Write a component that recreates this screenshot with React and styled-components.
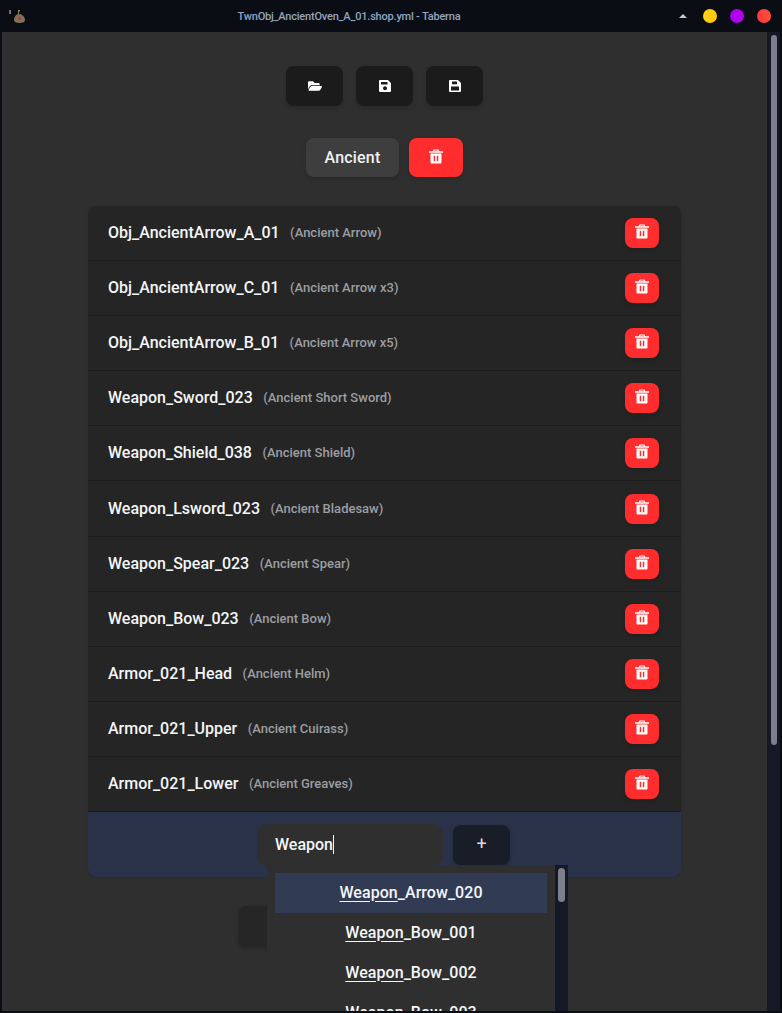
import React from 'react';
import styled, { createGlobalStyle } from 'styled-components';
import { FaFolderOpen } from 'react-icons/fa';

const GlobalStyle = createGlobalStyle`
  html, body {
    margin: 0;
    padding: 0;
    height: 100%;
    overflow: hidden;
    background: #0b0d14;
  }
  * {
    box-sizing: border-box;
  }
`;

const Window = styled.div`
  width: 782px;
  height: 1013px;
  display: flex;
  flex-direction: column;
  background: #0b0d14;
  padding: 0 2px 2px;
  font-family: Roboto, "Liberation Sans", sans-serif;
  overflow: hidden;
`;

const TitleBar = styled.header`
  height: 32px;
  flex: none;
  margin: 0 -2px;
  padding: 0 11px 0 8px;
  display: flex;
  align-items: center;
`;

const AppIcon = styled.svg`
  width: 20px;
  height: 20px;
  flex: none;
`;

const Title = styled.div`
  flex: 1;
  text-align: center;
  color: #93a5c2;
  font-size: 11px;
  font-weight: 500;
  letter-spacing: -0.2px;
  padding-right: 9px;
`;

const Arrow = styled.div`
  width: 0;
  height: 0;
  border-left: 4px solid transparent;
  border-right: 4px solid transparent;
  border-bottom: 4px solid #c4c7cf;
  margin-right: 16px;
`;

const Dot = styled.div`
  width: 14px;
  height: 14px;
  border-radius: 50%;
  background: ${({ $color }) => $color};
  margin-left: ${({ $first }) => ($first ? 0 : 13)}px;
`;

const Body = styled.div`
  flex: 1;
  min-height: 0;
  display: flex;
`;

const Main = styled.main`
  position: relative;
  flex: 1;
  min-width: 0;
  background: #2f2f2f;
  display: flex;
  flex-direction: column;
  align-items: center;
  padding-top: 34px;
  overflow: hidden;
`;

const Toolbar = styled.div`
  display: flex;
  justify-content: center;
  gap: 13px;
  margin-bottom: 32px;
`;

const ToolButton = styled.button`
  width: 57px;
  height: 40px;
  border: 0;
  border-radius: 8px;
  background: #1b1b1b;
  color: #fff;
  font-size: 14px;
  display: flex;
  align-items: center;
  justify-content: center;
  padding: 0 0 1px;
  box-shadow: 0 2px 4px rgba(0, 0, 0, 0.15);
`;

const Tabs = styled.div`
  display: flex;
  justify-content: center;
  gap: 10px;
  margin-bottom: 29px;
`;

const TabName = styled.button`
  width: 93px;
  height: 39px;
  border: 0;
  border-radius: 8px;
  background: #3e3e3e;
  color: #f2f2f2;
  font-family: inherit;
  font-size: 16px;
  font-weight: 500;
  letter-spacing: 0.2px;
  box-shadow: 0 2px 4px rgba(0, 0, 0, 0.15);
`;

const DangerButton = styled.button`
  width: ${({ $wide }) => ($wide ? 54 : 34)}px;
  height: ${({ $wide }) => ($wide ? 39 : 30)}px;
  flex: none;
  border: 0;
  padding: 0 0 3px;
  border-radius: 8px;
  background: #ff2d2d;
  color: #fff;
  display: flex;
  align-items: center;
  justify-content: center;
  box-shadow: 0 2px 4px rgba(0, 0, 0, 0.15);
`;

const ListCard = styled.section`
  width: 593px;
  border-radius: 8px;
  background: #252525;
  overflow: hidden;
  box-shadow: 0 0 3px rgba(0, 0, 0, 0.12);
`;

const Row = styled.div`
  height: 55.1px;
  display: flex;
  align-items: center;
  padding: 0 22px 0 20px;
  border-bottom: 1px solid #1c1c1c;
`;

const ItemName = styled.span`
  color: #f4f6f8;
  font-size: 16px;
  line-height: 18px;
  font-weight: 500;
`;

const ItemLabel = styled.span`
  flex: 1;
  margin-left: 10.5px;
  color: #9b9ea3;
  font-size: 13px;
  line-height: 18px;
  font-weight: 500;
`;

const AddBar = styled.div`
  height: 65px;
  background: #2a3249;
  display: flex;
  justify-content: center;
  align-items: center;
  gap: 10px;
  padding: 0 2px 0 0;
`;

const SearchBox = styled.div`
  width: 186px;
  height: 42px;
  border-radius: 10px;
  background: #2f2f2f;
  color: #f4f6f8;
  font-size: 16px;
  font-weight: 500;
  display: flex;
  align-items: center;
  padding-left: 18px;
`;

const Caret = styled.span`
  display: inline-block;
  width: 1px;
  height: 19px;
  background: #f4f6f8;
`;

const PlusButton = styled.button`
  width: 57px;
  height: 40px;
  border: 0;
  border-radius: 8px;
  background: #191d28;
  color: #dcdcdc;
  font-family: inherit;
  font-size: 18px;
  padding: 0 0 3px;
  box-shadow: 0 2px 4px rgba(0, 0, 0, 0.15);
`;

const FooterButton = styled.button`
  width: 120px;
  height: 41px;
  margin-top: 29px;
  margin-right: 173px;
  border: 0;
  border-radius: 8px;
  background: #262626;
  box-shadow: 0 2px 4px rgba(0, 0, 0, 0.15);
`;

const Dropdown = styled.div`
  position: absolute;
  left: 265px;
  top: 833px;
  width: 301px;
  height: 146px;
  display: flex;
  background: #2f2f2f;
  overflow: hidden;
`;

const Options = styled.div`
  flex: 1;
  padding: 8px;
`;

const Option = styled.div`
  height: 40px;
  display: flex;
  align-items: center;
  justify-content: center;
  padding-bottom: 2px;
  color: #f4f6f8;
  font-size: 16px;
  font-weight: 500;
  letter-spacing: 0.05px;
  background: ${({ $active }) => ($active ? '#323b54' : 'transparent')};
  u {
    text-underline-offset: 3px;
  }
`;

const ScrollTrack = styled.div`
  flex: none;
  width: 13px;
  background: #151926;
  padding: ${({ $inner }) => ($inner ? '3px 3px' : '3px 3px 0 4px')};
`;

const ScrollThumb = styled.div`
  height: ${({ $h }) => $h}px;
  border-radius: 4px;
  background: #7d7f8c;
`;

function FloppySolid() {
  return (
    <svg width="14" height="14" viewBox="0 0 14 14">
      <path
        fill="currentColor"
        fillRule="evenodd"
        d="M2 1h8l3 3v8a1 1 0 0 1-1 1H2a1 1 0 0 1-1-1V2a1 1 0 0 1 1-1zM3 3v2.5h6.5V3zM7 7.2a2 2 0 1 0 0 4 2 2 0 0 0 0-4z"
      />
    </svg>
  );
}

function FloppyOutline() {
  return (
    <svg width="14" height="14" viewBox="0 0 14 14">
      <path
        fill="currentColor"
        fillRule="evenodd"
        d="M2 1h8l3 3v8a1 1 0 0 1-1 1H2a1 1 0 0 1-1-1V2a1 1 0 0 1 1-1zM4 2.4v2.8h5V2.4zM3 7.5v4h8v-4z"
      />
    </svg>
  );
}

function TrashIcon() {
  return (
    <svg width="14" height="15" viewBox="0 0 14 15">
      <path
        fill="currentColor"
        fillRule="evenodd"
        d="M4.5 0.5h5l0.8 1.7H14v1.6H0V2.2h3.7zM5.4 1.5l-0.3 0.7h3.800l-0.3-0.7zM1.5 4.6h11V13.5a1 1 0 0 1-1 1h-9a1 1 0 0 1-1-1zM4.700 6.800v5.400h1.500V6.800zM7.800 6.800v5.400h1.500V6.800z"
      />
    </svg>
  );
}

const items = [
  ['Obj_AncientArrow_A_01', 'Ancient Arrow'],
  ['Obj_AncientArrow_C_01', 'Ancient Arrow x3'],
  ['Obj_AncientArrow_B_01', 'Ancient Arrow x5'],
  ['Weapon_Sword_023', 'Ancient Short Sword'],
  ['Weapon_Shield_038', 'Ancient Shield'],
  ['Weapon_Lsword_023', 'Ancient Bladesaw'],
  ['Weapon_Spear_023', 'Ancient Spear'],
  ['Weapon_Bow_023', 'Ancient Bow'],
  ['Armor_021_Head', 'Ancient Helm'],
  ['Armor_021_Upper', 'Ancient Cuirass'],
  ['Armor_021_Lower', 'Ancient Greaves'],
];

const suggestions = ['_Arrow_020', '_Bow_001', '_Bow_002', '_Bow_003'];

function App() {
  return (
    <Window>
      <GlobalStyle />
      <TitleBar>
        <AppIcon viewBox="0 0 20 20">
          <rect x="1" y="4" width="2" height="4" fill="#6f7276" />
          <path d="M10 4h2v1l-1 1v2h-1z" fill="#8a8456" />
          <path d="M6 14c0-3 2-6 5-6s6 3 6 6c0 2-2 3-5.5 3S6 16 6 14z" fill="#83705a" />
          <rect x="10" y="11" width="3" height="3" fill="#b0413e" />
        </AppIcon>
        <Title>TwnObj_AncientOven_A_01.shop.yml - Taberna</Title>
        <Arrow />
        <Dot $first $color="linear-gradient(90deg, #ffd21a, #ffc800)" />
        <Dot $color="linear-gradient(90deg, #a800f0, #b800e8)" />
        <Dot $color="linear-gradient(90deg, #ff3838, #ff5040)" />
      </TitleBar>
      <Body>
        <Main>
          <Toolbar>
            <ToolButton><FaFolderOpen /></ToolButton>
            <ToolButton><FloppySolid /></ToolButton>
            <ToolButton><FloppyOutline /></ToolButton>
          </Toolbar>
          <Tabs>
            <TabName>Ancient</TabName>
            <DangerButton $wide><TrashIcon /></DangerButton>
          </Tabs>
          <ListCard>
            {items.map(([name, label]) => (
              <Row key={name}>
                <ItemName>{name}</ItemName>
                <ItemLabel>({label})</ItemLabel>
                <DangerButton><TrashIcon /></DangerButton>
              </Row>
            ))}
            <AddBar>
              <SearchBox>Weapon<Caret /></SearchBox>
              <PlusButton>+</PlusButton>
            </AddBar>
          </ListCard>
          <FooterButton />
          <Dropdown>
            <Options>
              {suggestions.map((rest, i) => (
                <Option key={rest} $active={i === 0}>
                  <span><u>Weapon</u>{rest}</span>
                </Option>
              ))}
            </Options>
            <ScrollTrack $inner>
              <ScrollThumb $h={34} />
            </ScrollTrack>
          </Dropdown>
        </Main>
        <ScrollTrack>
          <ScrollThumb $h={710} />
        </ScrollTrack>
      </Body>
    </Window>
  );
}

export default App;
